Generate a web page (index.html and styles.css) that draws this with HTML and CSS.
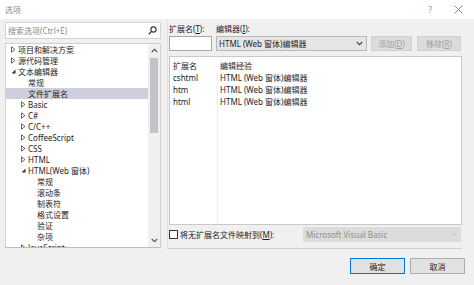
FILE: index.html
```html
<!DOCTYPE html>
<html lang="zh">
<head>
<meta charset="utf-8">
<title>选项</title>
<link rel="stylesheet" href="styles.css">
</head>
<body>
<div class="dialog">
  <div class="titlebar">
    <span class="title">选项</span>
    <span class="tb-icons">
      <span class="help">?</span>
      <svg class="close" width="9" height="9" viewBox="0 0 9 9"><path d="M0.5 0.5L8.5 8.5M8.5 0.5L0.5 8.5" stroke="#8a8a8a" stroke-width="1" fill="none"/></svg>
    </span>
  </div>
  <div class="content">
    <div class="left">
      <div class="search">
        <span class="placeholder">搜索选项(Ctrl+E)</span>
        <svg width="9" height="9" viewBox="0 0 9 9"><circle cx="5.5" cy="3.5" r="2.6" stroke="#333" stroke-width="1.1" fill="none"/><path d="M3.6 5.4L0.8 8.2" stroke="#333" stroke-width="1.3"/></svg>
      </div>
      <div class="tree">
        <div class="tree-list">
          <div class="row l0"><span class="tw"><svg width="5" height="7" viewBox="0 0 5 7"><path d="M0.5 0.8L4 3.5L0.5 6.2Z" stroke="#555" stroke-width="0.9" fill="none"/></svg></span>项目和解决方案</div>
          <div class="row l0"><span class="tw"><svg width="5" height="7" viewBox="0 0 5 7"><path d="M0.5 0.8L4 3.5L0.5 6.2Z" stroke="#555" stroke-width="0.9" fill="none"/></svg></span>源代码管理</div>
          <div class="row l0"><span class="tw"><svg width="5" height="7" viewBox="0 0 5 7"><path d="M4.5 1.5L4.5 5.5L0.5 5.5Z" fill="#333"/></svg></span>文本编辑器</div>
          <div class="row l1 leaf">常规</div>
          <div class="row l1 leaf selected">文件扩展名</div>
          <div class="row l1"><span class="tw"><svg width="5" height="7" viewBox="0 0 5 7"><path d="M0.5 0.8L4 3.5L0.5 6.2Z" stroke="#555" stroke-width="0.9" fill="none"/></svg></span>Basic</div>
          <div class="row l1"><span class="tw"><svg width="5" height="7" viewBox="0 0 5 7"><path d="M0.5 0.8L4 3.5L0.5 6.2Z" stroke="#555" stroke-width="0.9" fill="none"/></svg></span>C#</div>
          <div class="row l1"><span class="tw"><svg width="5" height="7" viewBox="0 0 5 7"><path d="M0.5 0.8L4 3.5L0.5 6.2Z" stroke="#555" stroke-width="0.9" fill="none"/></svg></span>C/C++</div>
          <div class="row l1"><span class="tw"><svg width="5" height="7" viewBox="0 0 5 7"><path d="M0.5 0.8L4 3.5L0.5 6.2Z" stroke="#555" stroke-width="0.9" fill="none"/></svg></span>CoffeeScript</div>
          <div class="row l1"><span class="tw"><svg width="5" height="7" viewBox="0 0 5 7"><path d="M0.5 0.8L4 3.5L0.5 6.2Z" stroke="#555" stroke-width="0.9" fill="none"/></svg></span>CSS</div>
          <div class="row l1"><span class="tw"><svg width="5" height="7" viewBox="0 0 5 7"><path d="M0.5 0.8L4 3.5L0.5 6.2Z" stroke="#555" stroke-width="0.9" fill="none"/></svg></span>HTML</div>
          <div class="row l1"><span class="tw"><svg width="5" height="7" viewBox="0 0 5 7"><path d="M4.5 1.5L4.5 5.5L0.5 5.5Z" fill="#333"/></svg></span>HTML(Web 窗体)</div>
          <div class="row l2 leaf">常规</div>
          <div class="row l2 leaf">滚动条</div>
          <div class="row l2 leaf">制表符</div>
          <div class="row l2 leaf">格式设置</div>
          <div class="row l2 leaf">验证</div>
          <div class="row l2 leaf">杂项</div>
          <div class="row l1"><span class="tw"><svg width="5" height="7" viewBox="0 0 5 7"><path d="M0.5 0.8L4 3.5L0.5 6.2Z" stroke="#555" stroke-width="0.9" fill="none"/></svg></span>JavaScript</div>
        </div>
        <div class="scrollbar">
          <div class="arrow"><svg width="7" height="5" viewBox="0 0 7 5"><path d="M0.8 4L3.5 1.3L6.2 4" stroke="#555" stroke-width="1.1" fill="none"/></svg></div>
          <div class="track"><div class="thumb"></div></div>
          <div class="arrow"><svg width="7" height="5" viewBox="0 0 7 5"><path d="M0.8 1L3.5 3.7L6.2 1" stroke="#555" stroke-width="1.1" fill="none"/></svg></div>
        </div>
      </div>
    </div>
    <div class="right">
      <div class="top-row">
        <div class="field ext">
          <label>扩展名(<u>T</u>):</label>
          <div class="input"></div>
        </div>
        <div class="field editor">
          <label>编辑器(<u>I</u>):</label>
          <div class="select">
            <span>HTML (Web 窗体)编辑器</span>
            <svg width="7" height="5" viewBox="0 0 7 5"><path d="M0.8 1L3.5 3.7L6.2 1" stroke="#444" stroke-width="1.1" fill="none"/></svg>
          </div>
        </div>
        <div class="btn disabled add">添加(<u>D</u>)</div>
        <div class="btn disabled remove">移除(<u>R</u>)</div>
      </div>
      <div class="list">
        <div class="lrow head"><span class="c1">扩展名</span><span class="c2">编辑经验</span></div>
        <div class="lrow"><span class="c1">cshtml</span><span class="c2">HTML (Web 窗体)编辑器</span></div>
        <div class="lrow"><span class="c1">htm</span><span class="c2">HTML (Web 窗体)编辑器</span></div>
        <div class="lrow"><span class="c1">html</span><span class="c2">HTML (Web 窗体)编辑器</span></div>
        <div class="divider"></div>
      </div>
      <div class="map-row">
        <span class="checkbox"></span>
        <span class="map-label">将无扩展名文件映射到(<u>M</u>):</span>
        <div class="select disabled-select">
          <span>Microsoft Visual Basic</span>
          <svg width="7" height="5" viewBox="0 0 7 5"><path d="M0.8 1L3.5 3.7L6.2 1" stroke="#bbb" stroke-width="1" fill="none"/></svg>
        </div>
      </div>
    </div>
  </div>
  <div class="footer">
    <div class="btn ok">确定</div>
    <div class="btn cancel">取消</div>
  </div>
</div>
</body>
</html>
```
FILE: styles.css
```css
* { box-sizing: border-box; }
html, body { margin: 0; padding: 0; }
body {
  width: 474px;
  height: 285px;
  overflow: hidden;
  background: #f0f0f0;
  font-family: "Noto Sans", "Noto Sans CJK SC", sans-serif;
  font-size: 8px;
  color: #1e1e1e;
}
.dialog { width: 474px; height: 285px; display: flex; flex-direction: column; }
.titlebar {
  height: 19px;
  background: #fff;
  display: flex;
  align-items: center;
  justify-content: space-between;
  padding: 0 11px 0 5px;
  flex: none;
}
.title { color: #8a8a8a; font-size: 8px; line-height: 1; }
.tb-icons { display: flex; align-items: center; gap: 22px; }
.help { color: #8a8a8a; font-size: 8px; line-height: 1; }
.close { display: block; }
.content { display: flex; height: 230px; padding-left: 5px; flex: none; }
.left { width: 156px; display: flex; flex-direction: column; padding-top: 3px; }
.search {
  height: 17px;
  background: #fff;
  border: 1px solid #d4d4d4;
  display: flex;
  align-items: center;
  justify-content: space-between;
  padding: 0 3px 0 2px;
}
.placeholder { color: #8a8a8a; }
.tree {
  margin-top: 4px;
  height: 205px;
  background: #fff;
  border: 1px solid #cfcfcf;
  border-bottom: 1px solid #bdbdbd;
  display: flex;
  overflow: hidden;
}
.tree-list { flex: 1; overflow: hidden; }
.row {
  height: 11px;
  line-height: 11px;
  display: flex;
  align-items: center;
  white-space: nowrap;
}
.row.l0 { padding-left: 5px; }
.row.l1 { padding-left: 15px; }
.row.leaf.l1 { padding-left: 22px; }
.row.l2.leaf { padding-left: 31px; }
.tw { width: 7px; flex: none; display: flex; align-items: center; }
.tw svg { display: block; }
.row.selected { background: #cdcfdc; }
.scrollbar {
  width: 12px;
  background: #f0f0f0;
  display: flex;
  flex-direction: column;
  flex: none;
}
.arrow { height: 13px; display: flex; align-items: center; justify-content: center; flex: none; }
.track { flex: 1; padding: 1px 2px 0 2px; }
.thumb { height: 75px; background: #c2c3c9; }
.right {
  margin-left: 6px;
  width: 295px;
  border-left: 1px solid #e2e2e2;
  border-bottom: 1px solid #d0d0d0;
  padding: 4px 0 0 1px;
  display: flex;
  flex-direction: column;
}
.top-row { display: flex; align-items: flex-end; }
.field { display: flex; flex-direction: column; }
.field label { height: 12px; line-height: 12px; margin-bottom: 1px; white-space: nowrap; }
.ext { width: 43px; }
.editor { width: 151px; margin-left: 4px; }
.input { height: 15px; background: #fff; border: 1px solid #a9a9a9; }
.select {
  height: 15px;
  background: #e5e5e5;
  border: 1px solid #b9b9b9;
  display: flex;
  align-items: center;
  justify-content: space-between;
  padding: 0 3px 0 2px;
  white-space: nowrap;
}
.btn {
  height: 15px;
  display: flex;
  align-items: center;
  justify-content: center;
  border: 1px solid #adadad;
  background: #e1e1e1;
  white-space: nowrap;
}
.btn.disabled { background: #dcdcdc; border-color: #cfcfcf; color: #a0a0a0; }
.add { width: 41px; margin-left: 4px; }
.remove { width: 44px; margin-left: 5px; }
.list {
  position: relative;
  margin-top: 5px;
  width: 293px;
  height: 169px;
  background: #fff;
  border: 1px solid #c8c8c8;
  padding-top: 3px;
}
.lrow { height: 12px; line-height: 12px; display: flex; white-space: nowrap; position: relative; z-index: 1; }
.c1 { width: 50px; padding-left: 3px; }
.c2 { padding-left: 0; }
.divider { position: absolute; left: 47px; top: 14px; bottom: 0; width: 1px; background: #f0f0f0; }
.map-row { display: flex; align-items: center; height: 15px; margin-top: 2px; }
.checkbox { width: 9px; height: 9px; border: 1px solid #333; background: #fff; flex: none; }
.map-label { margin-left: 2px; width: 123px; white-space: nowrap; }
.disabled-select { width: 158px; background: #dcdcdc; border-color: #dcdcdc; color: #8d8d8d; }
.footer { flex: 1; display: flex; justify-content: flex-end; padding: 9px 9px 0 0; gap: 5px; }
.ok, .cancel { width: 55px; height: 16px; }
.ok { border-color: #0078d7; }
```
